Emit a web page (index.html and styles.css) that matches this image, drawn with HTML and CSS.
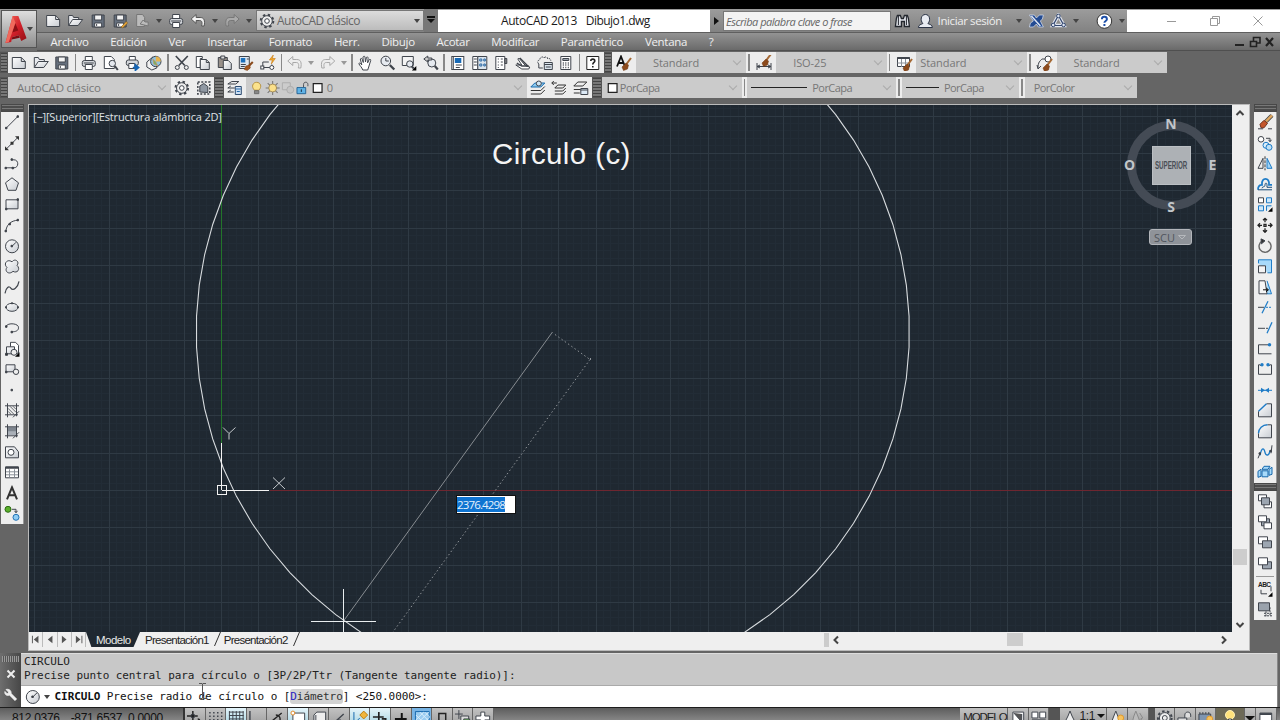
FILE: index.html
```html
<!DOCTYPE html>
<html lang="es">
  <head>
    <meta charset="utf-8">
    <title>AutoCAD 2013 - Dibujo1.dwg</title>
    <link rel="stylesheet" href="styles.css">
  </head>
  <body>
    <svg class="sprite">
      <defs>
        <linearGradient id="shade" x1="0" y1="0" x2="1" y2="1">
          <stop offset="0" stop-color="#fff"/>
          <stop offset="1" stop-color="#c9cdd3"/>
        </linearGradient>
        <linearGradient id="logo-red" x1="0" y1="0" x2="1" y2="1">
          <stop offset="0" stop-color="#f26a5c"/>
          <stop offset=".5" stop-color="#d2202a"/>
          <stop offset="1" stop-color="#8d0d12"/>
        </linearGradient>
      </defs>

      <!-- files -->
      <symbol id="new" viewBox="0 0 16 16"><path d="M1.500 2.500h9l4 4v7h-13z" fill="url(#shade)"/><path d="M10.500 2.500v4h4"/></symbol>
      <symbol id="open" viewBox="0 0 16 16"><path d="M1.500 12.500v-10h4l1 2h5v2" fill="#e8eaee"/><path d="M1.500 12.500l4-6h10l-4.500 6z" fill="url(#shade)"/></symbol>
      <symbol id="save" viewBox="0 0 16 16"><path d="M2 2h12v12h-12z" fill="#66707e"/><path d="M4.500 2h7v5h-7z" fill="#f4f4f4"/><path d="M4.500 10h7v4h-7z" fill="#fff"/><path d="M6.500 11v2"/></symbol>
      <symbol id="save-as" viewBox="0 0 16 16"><use href="#save"/><path d="M9 14l5-5.500 1.500 1.500-5 5z" fill="#e8a53a" stroke="#7a5a20" stroke-width=".6"/></symbol>
      <symbol id="export" viewBox="0 0 16 16"><path d="M2.500 1.500h6l2 3v9h-8z" fill="#bbb" stroke="#777"/><path d="M6 11l3-4 2 2h3v4z" fill="#bbb" stroke="#777"/></symbol>
      <symbol id="print" viewBox="0 0 16 16"><path d="M4.500 6v-4.500h7v4.500" fill="#fff"/><rect x="1.500" y="5.500" width="13" height="6" rx="2" fill="#d4d7db"/><path d="M4.500 9.500h7v5h-7z" fill="#fff"/><path d="M3 8h10"/></symbol>
      <symbol id="preview" viewBox="0 0 16 16"><path d="M1.500 1.500h7l3 3v9h-10z" fill="#fff"/><circle cx="9.500" cy="8.500" r="3.200" fill="#e4e8ee"/><path d="M12 11l3 4" stroke-width="2"/></symbol>
      <symbol id="publish" viewBox="0 0 16 16"><path d="M4.500 5v-3.500h6v3.500" fill="#fff"/><rect x="1.500" y="5" width="12" height="5.500" rx="2" fill="#d4d7db"/><path d="M4 8.500h6v5h-6z" fill="#fff"/><path d="M8 12.500h5m-2.500-3l3.500 3-3.500 3z" stroke="#1565b5" fill="#1565b5" stroke-width="1.400"/></symbol>
      <symbol id="globe" viewBox="0 0 16 16"><path d="M1 7l6-5 4 3v8l-5 2-5-3z" fill="#f1f1f1"/><circle cx="10" cy="6.500" r="5.200" fill="#8fc2df"/><path d="M10 1.500v5h5c0-3-2-5-5-5z" fill="#e8b34c" stroke="none"/><path d="M7 4l3 3 2 4-4-2z" fill="#79b264" stroke="#d98b5b" stroke-width=".6"/></symbol>

      <!-- edit -->
      <symbol id="cut" viewBox="0 0 16 16"><path d="M2 1l9 9.500M14 1l-9 9.500" stroke-width="1.700"/><circle cx="3.500" cy="12.500" r="2"/><circle cx="12.500" cy="12.500" r="2"/></symbol>
      <symbol id="copy" viewBox="0 0 16 16"><path d="M1.500 1.500h6v2h-2v9h-4z" fill="#fff"/><path d="M5.500 4.500h6l3 3v7h-9z" fill="url(#shade)"/><path d="M11.500 4.500v3h3"/></symbol>
      <symbol id="paste" viewBox="0 0 16 16"><path d="M1.500 2.500h9v10h-9z" fill="#98908a"/><path d="M4 1h4v3h-4z" fill="#ddd"/><path d="M6.500 5.500h5l3 3v6h-8z" fill="url(#shade)"/></symbol>
      <symbol id="match" viewBox="0 0 16 16"><path d="M1.500 1.500h10v12h-10z" fill="#dfe8f1"/><path d="M3 3h4.500v4.500h-4.500z" fill="#1a70bd" stroke="none"/><path d="M9 4h2M3 9.500h5M3 11.500h4"/><path d="M15 7l-4 4" stroke="#8a4a1c" stroke-width="2"/><path d="M8 11l4-1 .5 3-3 2.500-3-1z" fill="#a45a22" stroke="#7a3d12" stroke-width=".5"/></symbol>
      <symbol id="block-edit" viewBox="0 0 16 16"><path d="M3 12.500v-5.500h6M3 12.500h9v-3"/><rect x="1" y="11" width="3" height="3" fill="#fff"/><circle cx="12" cy="12.500" r="2" fill="#fff"/><path d="M13.500 0l-4 5h3l-1 4 4-5.500h-3z" fill="#f2a82c" stroke="#c77a10" stroke-width=".6"/></symbol>
      <symbol id="undo" viewBox="0 0 16 16"><path d="M1 6l5-4.500v3h4c4 0 5 3 4 8.500h-2.500c1-4 0-5.500-2-5.500h-3.500v3z"/></symbol>
      <symbol id="redo" viewBox="0 0 16 16"><path d="M15 6l-5-4.500v3h-4c-4 0-5 3-4 8.500h2.500c-1-4 0-5.500 2-5.500h3.500v3z"/></symbol>

      <!-- view -->
      <symbol id="pan" viewBox="0 0 16 16"><path d="M5 15c-1-3-3-4-4-6.500 1-1 2 0 3 1.500l-1.500-6c1-1 1.800-.5 2 .5l1 3-.3-5.500c.5-1 1.800-1 2 0l.5 5 1-4.700c1-.8 1.800 0 1.600 1l-.5 4.500 1.700-3.300c1-.5 1.700.2 1.400 1l-2 6.500-1 3z" fill="#fff"/></symbol>
      <symbol id="zoom-rt" viewBox="0 0 16 16"><circle cx="6" cy="6" r="4.800" fill="#e6eaf0"/><path d="M6 3v3h3"/><path d="M10 10l4.500 4.500" stroke-width="2.400"/></symbol>
      <symbol id="zoom-win" viewBox="0 0 16 16"><path d="M1.500 1.500h11v9h-11z" fill="#f4f4f4"/><circle cx="9" cy="9" r="3.200" fill="#e6eaf0"/><path d="M11 11.500l2 2" stroke-width="2"/><path d="M15.500 11v4.500h-4.500z" fill="#000" stroke="none"/></symbol>
      <symbol id="zoom-prev" viewBox="0 0 16 16"><circle cx="9" cy="8" r="4" fill="#e6eaf0"/><path d="M12 11l3 3.500" stroke-width="2.200"/><path d="M1 4l4-3v2h4v2h-4v2z" fill="#ccc"/></symbol>

      <!-- palettes -->
      <symbol id="props" viewBox="0 0 16 16"><rect x="2" y="1.500" width="12" height="13" fill="#fff"/><path d="M5 3h6.500v5h-6.500z" fill="#1769b5" stroke="none"/><path d="M3.500 2v12M6 10h6M6 12.500h4"/></symbol>
      <symbol id="dcenter" viewBox="0 0 16 16"><path d="M1 1.500h5v13h-5z" fill="#fff"/><path d="M6 1.500h9v13h-9z" fill="#dbe5ee"/><path d="M8 4h2v2h-2zM12 4h1.500v2h-1.500zM8 9h2v2h-2zM12 9h1.500v2h-1.500z" stroke="#2b69a4"/><path d="M2 4h3M2 7h3M2 10h3"/></symbol>
      <symbol id="palette" viewBox="0 0 16 16"><path d="M3 1.500h9v13h-9z" fill="#fff"/><path d="M12 3.500h2v5h-2z" fill="#888"/><path d="M5 4h1M8 4h2M5 7h1M8 7h2M5 10h1M8 10h2M5 12.500h1"/></symbol>
      <symbol id="sheets" viewBox="0 0 16 16"><path d="M1 10l6 4h7l1-2-4-1-7-8-1 1 4 6z" fill="#fff"/><path d="M5 3l8 8M2 8l5 3h7" stroke-width="1.400"/></symbol>
      <symbol id="markup" viewBox="0 0 16 16"><path d="M2 9c-2-2-1-4 1-4 0-3 3-4 4-2 2-2 4-1 4 1 2-1 3 0 3 2" stroke-dasharray="2 1"/><path d="M7.500 7.500h8v7h-8z" fill="#dbe5ee"/><path d="M7.500 9.500h8M9 12h5M2 9v4h4"/></symbol>
      <symbol id="calc" viewBox="0 0 16 16"><path d="M3 1.500h10v13h-10z" fill="#fff"/><path d="M5 3.500h6v2h-6z" fill="#9aa3ad"/><path d="M5 8h1M7.500 8h1M10 8h1M5 10h1M7.500 10h1M10 10h1M5 12.500h1M7.500 12.500h1M10 12.500h1" stroke-width="1.400"/></symbol>
      <symbol id="help-box" viewBox="0 0 16 16"><path d="M2 1.500h12v13h-12z" fill="#fff" stroke="#222"/><path d="M6 6c0-2.500 4-2.500 4 0 0 1.500-2 1.500-2 3.500M8 11v1.500" stroke="#222" stroke-width="1.600"/></symbol>

      <!-- styles -->
      <symbol id="brush" viewBox="0 0 16 16"><path d="M15 3l-4.500 6" stroke="#a66a35" stroke-width="2"/><path d="M6 12l4-4 2.500 2-1 4-4 1.500z" fill="#8d4b1c" stroke="#6e3610" stroke-width=".5"/></symbol>
      <symbol id="text-style" viewBox="0 0 16 16"><path d="M1 11.500l4-10 4 10M2.500 8h5" stroke="#111" stroke-width="1.800"/><use href="#brush"/></symbol>
      <symbol id="dim-style" viewBox="0 0 16 16"><path d="M1 8v7M15 8v7M1 11.500h14M4 10l-3 1.500 3 1.500M12 10l3 1.500-3 1.500"/><use href="#brush" transform="translate(0 -4)"/></symbol>
      <symbol id="table-style" viewBox="0 0 16 16"><path d="M1.500 2.500h12v9h-12z" fill="#fff"/><path d="M1.500 8h12M5.500 4v8M9.500 4v8" stroke="#8a9098"/><path d="M1.500 3h12" stroke-width="2"/><use href="#brush" transform="translate(1 1)"/></symbol>
      <symbol id="leader-style" viewBox="0 0 16 16"><path d="M1 13c0-6 2-7 4-9h4"/><path d="M0 10l1 4 3-3"/><circle cx="11" cy="4" r="3" fill="#fff"/><use href="#brush" transform="translate(0 1)"/></symbol>

      <!-- layers -->
      <symbol id="gear" viewBox="0 0 16 16"><circle cx="8" cy="8" r="6.300" stroke-width="2" stroke-dasharray="2.400 2.550"/><circle cx="8" cy="8" r="5.300" fill="#eee"/><circle cx="8" cy="8" r="2.300" fill="#fff"/></symbol>
      <symbol id="workspace" viewBox="0 0 16 16"><path d="M2 2h12v12h-12z" stroke-dasharray="2 1.500" stroke-width="1.500"/><path d="M4 12v-6l4-2.500 4 3v6z" fill="#8f98a3"/></symbol>
      <symbol id="layers" viewBox="0 0 16 16"><path d="M1 4l4-2.500h7l-3 2.500zM1 8l3-2M1 8h7M1 12l3-2M1 12h6" /><path d="M8.500 6.500h6v8h-6z" fill="#cfe0f2" stroke="#2d4b70"/><path d="M9 9h5M10 11.500h3" stroke="#2468ad"/></symbol>
      <symbol id="bulb" viewBox="0 0 16 16"><path d="M5.500 10.500c-4-4-2-9 2.500-9s6.500 5 2.500 9z" fill="#fbe28c" stroke="#b08c3a"/><path d="M5.500 11h5v3.500h-5z" fill="#888" stroke="#666"/></symbol>
      <symbol id="sun" viewBox="0 0 16 16"><path d="M8 0v16M0 8h16M2.300 2.300l11.400 11.400M13.700 2.300L2.300 13.700" stroke="#777" stroke-width="1.200"/><circle cx="8" cy="8" r="4.500" fill="#fbe08a" stroke="#9c8350"/></symbol>
      <symbol id="freeze" viewBox="0 0 16 16"><path d="M2 2h9v8h-9z" fill="#ccc" stroke="#aaa"/><circle cx="11" cy="10" r="4" fill="#c4c4c4" stroke="#aaa"/></symbol>
      <symbol id="unlock" viewBox="0 0 16 16"><path d="M9 7v-3c0-3.500 5-3.500 5 0v2"/><path d="M1.500 7.500h10v7h-10z" fill="#61b3e6" stroke="#1b5c8f"/><path d="M6.500 9.500v3" stroke="#123"/></symbol>
      <symbol id="swatch" viewBox="0 0 16 16"><path d="M3 3h10v10h-10z" fill="#fff" stroke="#222" stroke-width="1.400"/></symbol>
      <symbol id="lay-current" viewBox="0 0 16 16"><path d="M1 7l4-4h10l-4 4z" fill="#8ecaf0" stroke="#1b6cad"/><path d="M1 10.500h10l4-4M1 14h10l4-4" stroke="#333"/><circle cx="9" cy="3.500" r="2.500" fill="#cfe6f6"/></symbol>
      <symbol id="lay-prev" viewBox="0 0 16 16"><path d="M4 8l3-3h8l-3 3zM4 11h8l3-3M4 14h8l3-3M6 3h-5m2-2l-2 2 2 2" stroke="#333"/></symbol>
      <symbol id="lay-state" viewBox="0 0 16 16"><path d="M1 6l4-4h9l-4 4zM1 9.500h7l1-1M1 13h6" stroke="#333"/><path d="M8 8.500h7v6h-7z" fill="#dce9f5"/><path d="M8 10h7"/></symbol>

      <!-- infocenter -->
      <symbol id="binoculars" viewBox="0 0 16 16"><path d="M1 13.500l1-8 1-3h3l1 3h2l1-3h3l1 3 1 8h-5v-5h-3v5z" fill="#dfe2e8" stroke="#23272e" stroke-width="1.300"/><path d="M4 3v9M12 3v9" stroke="#23272e"/></symbol>
      <symbol id="user" viewBox="0 0 16 16"><path d="M1 14.500c0-3 3-3 4.500-4-3-3-2-9 2.500-9s5.500 6 2.500 9c1.500 1 4.500 1 4.500 4z" fill="#e9ecf2" stroke="#2b3446"/></symbol>
      <symbol id="exchange" viewBox="0 0 16 16"><path d="M1 2h5l2 3 3-3h4l-1 4-2 2 3 6h-5l-2-3-3 3h-4l1-4 3-2z" fill="#234b92" stroke="#cbd5e8" stroke-width=".8"/><path d="M3 3l9 10" stroke="#dfe7f5" stroke-width="1.400"/></symbol>
      <symbol id="a360" viewBox="0 0 16 16"><path d="M8 2.500l5.500 10h-11z" stroke="#e0e5f0" stroke-width="3.500"/><path d="M8 2.500l5.500 10h-11z" stroke="#34486f" stroke-width="1.200"/><circle cx="8" cy="3" r="1.800" fill="#dfe5f2" stroke="#34486f"/><circle cx="2.800" cy="12" r="1.800" fill="#dfe5f2" stroke="#34486f"/><circle cx="13.200" cy="12" r="1.800" fill="#dfe5f2" stroke="#34486f"/></symbol>
      <symbol id="help" viewBox="0 0 16 16"><circle cx="8" cy="8" r="7.300" fill="#fff" stroke="#333"/><path d="M5.500 6.300c0-3.300 5-3.300 5 0 0 1.700-2.500 1.700-2.500 3.500M8 11v2" stroke="#1d4fa8" stroke-width="2"/></symbol>

      <!-- draw -->
      <symbol id="line" viewBox="0 0 16 16"><path d="M2 14L14 2"/><path d="M1.500 13h1.500v1.500h-1.500zM13 1.500h1.500v1.500h-1.500z" fill="#333"/></symbol>
      <symbol id="xline" viewBox="0 0 16 16"><path d="M2 14L14 2"/><path d="M1 11v4h4zM15 5v-4h-4zM6.500 6.500h3v3h-3z" fill="#333" stroke="none"/></symbol>
      <symbol id="pline" viewBox="0 0 16 16"><path d="M2 12.500h8c5 0 5-8 0-8h-2"/><path d="M1 12h1.500v1.500h-1.500zM8 12h1.500v1.500h-1.500zM7 3.500h1.500v1.500h-1.500z" fill="#333"/></symbol>
      <symbol id="polygon" viewBox="0 0 16 16"><path d="M8 1.500l6.500 5-2.500 7.500h-8l-2.500-7.500z" fill="url(#shade)"/></symbol>
      <symbol id="rect" viewBox="0 0 16 16"><path d="M2 3.500h12v9h-12z" fill="url(#shade)"/><path d="M1.500 12h1.500v1.500h-1.500zM13 2.500h1.500v1.500h-1.500z" fill="#333"/></symbol>
      <symbol id="arc" viewBox="0 0 16 16"><path d="M2 14c0-6 5-11 12-11"/><path d="M1 13h1.500v1.500h-1.500zM5 6h1.500v1.500h-1.500zM13 2h1.500v1.500h-1.500z" fill="#333"/></symbol>
      <symbol id="circle" viewBox="0 0 16 16"><circle cx="8" cy="8" r="6.500" fill="url(#shade)"/><path d="M8 8l4-4"/><path d="M7 7h1.500v1.500h-1.500z" fill="#333"/></symbol>
      <symbol id="cloud" viewBox="0 0 16 16"><path d="M8 3.500c3-4 8 0 5 3.500 4 4 0 8.500-4 6-4 4-9 0-6-4-4-3 0-9 5-5.500z" fill="url(#shade)"/></symbol>
      <symbol id="spline" viewBox="0 0 16 16"><path d="M1 14c1-6 4-8 6-5s7-1 8-7" stroke-width="1.200"/></symbol>
      <symbol id="ellipse" viewBox="0 0 16 16"><ellipse cx="8" cy="8" rx="6" ry="4" fill="url(#shade)"/><path d="M1.500 7.500h1v1h-1zM13.500 7.500h1v1h-1zM7.500 3.500h1v1h-1z" fill="#333"/></symbol>
      <symbol id="earc" viewBox="0 0 16 16"><path d="M2 6c2-4 13-3 12.500 1.500 0 3-3 4-6.500 4"/><path d="M1.500 5.500h1.500v1.500h-1.500zM7 11h1.500v1.500h-1.500z" fill="#333"/></symbol>
      <symbol id="insert" viewBox="0 0 16 16"><path d="M6.500 6v-5h5l3 3v8h-3" fill="#fff"/><path d="M2.500 5.500h8v7h-8z" fill="url(#shade)"/><circle cx="10" cy="11" r="3" fill="#eee"/><path d="M1.500 12h2v2h-2z" fill="#333"/><path d="M15.500 11v4.500h-4.500z" fill="#000" stroke="none"/></symbol>
      <symbol id="block" viewBox="0 0 16 16"><path d="M2 3.500h9v7h-9z" fill="url(#shade)"/><circle cx="12" cy="10.500" r="2.700" fill="#eee"/><path d="M1.500 10h1.500v1.500h-1.500z" fill="#333"/></symbol>
      <symbol id="point" viewBox="0 0 16 16"><path d="M7 7h1.500v1.500h-1.500z" fill="#555"/></symbol>
      <symbol id="hatch" viewBox="0 0 16 16"><path d="M1 3.500h14M1 12.500h13M3.500 1v14M12.500 1v13"/><path d="M4 6l6 6M4 9l3 3M6 4l6 6M9 4l3 3" stroke-width=".8"/><path d="M15 9l-6 6"/></symbol>
      <symbol id="gradient" viewBox="0 0 16 16"><path d="M4 4h8v8h-8z" fill="#a9afb7" stroke="none"/><path d="M4 4h8v4h-8z" fill="#7f868f" stroke="none"/><path d="M1 3.500h14M1 12.500h13M3.500 1v14M12.500 1v13M15 9l-6 6"/></symbol>
      <symbol id="region" viewBox="0 0 16 16"><path d="M1.500 2.500h9l4 5v6h-13z" fill="url(#shade)"/><circle cx="7" cy="8" r="3" fill="#fff"/></symbol>
      <symbol id="table" viewBox="0 0 16 16"><path d="M1.500 2.500h13v11h-13z" fill="#fff"/><path d="M2 3.500h12" stroke-width="2"/><path d="M2 7.500h12M2 10.500h12M5.500 5v8M10.500 5v8" stroke="#8a9098"/></symbol>
      <symbol id="mtext" viewBox="0 0 16 16"><path d="M3 14L8 2l5 12M4.800 10h6.400" stroke="#333" stroke-width="2"/></symbol>
      <symbol id="addsel" viewBox="0 0 16 16"><circle cx="4" cy="4" r="3" fill="#5bb02c" stroke="#2d6b14"/><circle cx="12" cy="12" r="3" fill="#8fcdf5" stroke="#2273b5"/><path d="M8 4h4v3m-1.500-1.500l1.500 2 1.500-2"/></symbol>

      <!-- modify -->
      <symbol id="erase" viewBox="0 0 16 16"><path d="M15 1l-6 6" stroke="#444" stroke-width="4"/><path d="M15 1l-6 6" stroke="#e0a860" stroke-width="2.500"/><path d="M3 10l4-4 3.500 3-3.500 4.500h-3z" fill="#c4562b" stroke="#6e3420"/><path d="M1 14.500h5M11 14.500h4"/></symbol>
      <symbol id="mcopy" viewBox="0 0 16 16"><circle cx="4" cy="4" r="2.800" fill="#fff"/><path d="M9 3h4v3m-1.500-1.500l1.500 2 1.500-2"/><circle cx="9" cy="10" r="3" stroke="#1f7cc7" fill="#dbeefa"/><circle cx="12" cy="12" r="3" stroke="#1f7cc7" fill="#bfe0f6"/></symbol>
      <symbol id="mirror" viewBox="0 0 16 16"><path d="M6 3v10h-5z" fill="#eee"/><path d="M10 3v10h5z" fill="#9fd2f5" stroke="#1f7cc7"/><path d="M8 1v14" stroke="#333" stroke-dasharray="3 1"/></symbol>
      <symbol id="offset" viewBox="0 0 16 16"><path d="M1 13.500c0-4 2-5 4-5-1-8 8-8 7 0h3" stroke="#1f7cc7" stroke-width="1.800"/><path d="M1 13.500h14M5 12c0-2 3-1 3-3 0-3 2-3 2 0v2h5" stroke="#1b4d7a"/></symbol>
      <symbol id="array" viewBox="0 0 16 16"><path d="M1.500 1.500h5v5h-5z" fill="#fff"/><path d="M9.500 1.500h5v5h-5zM1.500 9.500h5v5h-5zM9.500 14.500v-5h5" stroke="#1f7cc7" fill="#cfe8fa"/><path d="M15.500 11v4.500h-4.500z" fill="#000" stroke="none"/></symbol>
      <symbol id="move" viewBox="0 0 16 16"><path d="M8 1v4M8 11v4M1 8h4M11 8h4M6 3l2-2 2 2M6 13l2 2 2-2M3 6l-2 2 2 2M13 6l2 2-2 2M7 7h2v2h-2z" stroke="#222" stroke-width="1.300"/></symbol>
      <symbol id="rotate" viewBox="0 0 16 16"><path d="M11 2.800a6 6 0 1 1-5.500-.2" stroke="#666" stroke-width="1.400"/><path d="M4 .5l4 2-3.500 3z" fill="#333"/></symbol>
      <symbol id="scale" viewBox="0 0 16 16"><path d="M1.500 5v-3.500h13v13h-4" fill="#a8dafa" stroke="#1f7cc7"/><path d="M1.500 7.500h7v7h-7z" fill="#f3f3f3"/></symbol>
      <symbol id="stretch" viewBox="0 0 16 16"><path d="M10 1.500l4.500 13h-5" fill="#a8dafa" stroke="#1f7cc7"/><path d="M8 1.500h-6v13h8z" fill="#f6f6f6"/><path d="M6 10.500h5m-2-2l2.500 2-2.500 2" stroke="#111"/></symbol>
      <symbol id="trim" viewBox="0 0 16 16"><path d="M5 14l6-12" stroke="#1f7cc7" stroke-width="1.300"/><path d="M1 8h6"/><path d="M9 8h6" stroke="#1f7cc7" stroke-dasharray="2 1"/></symbol>
      <symbol id="extend" viewBox="0 0 16 16"><path d="M10 13l5-11" stroke="#1f7cc7" stroke-width="1.300"/><path d="M1 8h5"/><path d="M6 8h6" stroke-dasharray="2 1"/></symbol>
      <symbol id="break-pt" viewBox="0 0 16 16"><path d="M9 3.500h-7.500v9h13" fill="#eee"/><path d="M9 3.500h5"/><circle cx="12.500" cy="3.500" r="1.700" fill="#1f7cc7" stroke="none"/></symbol>
      <symbol id="break" viewBox="0 0 16 16"><path d="M3 3.500h-1.500v9.500h13v-9.500h-1.500" fill="#eee"/><path d="M3 4h2M11 4h2"/><circle cx="5" cy="3.500" r="1.700" fill="#1f7cc7" stroke="none"/><circle cx="11" cy="3.500" r="1.700" fill="#1f7cc7" stroke="none"/></symbol>
      <symbol id="join" viewBox="0 0 16 16"><path d="M1 8h14" stroke="#1f7cc7"/><path d="M4 5.500l4 2.500-4 2.500zM12 5.500l-4 2.500 4 2.500z" fill="#1f7cc7" stroke="none"/></symbol>
      <symbol id="chamfer" viewBox="0 0 16 16"><path d="M1.500 9v5.500h13v-13h-5" fill="url(#shade)"/><path d="M1.500 9l8-7.500" stroke="#1f7cc7" stroke-width="1.400"/></symbol>
      <symbol id="fillet" viewBox="0 0 16 16"><path d="M1.500 10v4.500h13v-13h-4" fill="url(#shade)"/><path d="M1.500 10c0-5 4-8.500 9-8.500" stroke="#1f7cc7" stroke-width="1.400"/></symbol>
      <symbol id="blend" viewBox="0 0 16 16"><path d="M3 11c2-9 4-7 5-3s4 4 5-2" stroke="#1f7cc7" stroke-width="1.400"/><path d="M1 14l2-5M15 1l-1 8"/><path d="M2 8.500h1.500v1.500h-1.500zM13 6h1.500v1.500h-1.500z" fill="#333"/></symbol>
      <symbol id="explode" viewBox="0 0 16 16"><path d="M5 6.500h6v6h-6zM1 7l3-2v7l-3 1zM12 5l3-2v7l-3 1zM5 5l2-3h6l-2 3z" fill="#a8dafa" stroke="#1668ad"/></symbol>

      <!-- draw order -->
      <symbol id="front" viewBox="0 0 16 16"><path d="M1.500 1.500h8v6h-8zM7 8.500h7.500v6h-7.500z" fill="#fff"/><path d="M4.500 4.500h8v7h-8z" fill="#9da6b1"/></symbol>
      <symbol id="back" viewBox="0 0 16 16"><path d="M4.500 4.500h8v7h-8z" fill="#9da6b1"/><path d="M1.500 1.500h8v6h-8zM7 8.500h7.500v6h-7.500z" fill="#fff"/></symbol>
      <symbol id="above" viewBox="0 0 16 16"><path d="M1.500 2.500h9v7h-9z" fill="#fff"/><path d="M5.500 6.500h9v7h-9z" fill="#9da6b1"/></symbol>
      <symbol id="under" viewBox="0 0 16 16"><path d="M5.500 6.500h9v7h-9z" fill="#9da6b1"/><path d="M1.500 2.500h9v7h-9z" fill="#fff"/></symbol>
      <symbol id="hatch-back" viewBox="0 0 16 16"><path d="M1.500 1.500h11v8h-11z" fill="#9aa2ac"/><path d="M7 12h8M7 14.500h8M9 10v5M13 6v9" stroke-dasharray="2 1"/></symbol>
    </svg>

    <div class="top-strip"></div>

    <header class="header">
      <div class="app-button">
        <svg class="logo" viewBox="0 0 24 32">
          <path d="M9 2h6l8.500 23-5.500 3-2.500-6-7 2-1 5-6 1z" fill="url(#logo-red)"/>
          <path d="M11.500 9l3.500 8-6.500 2z" fill="#8b1015"/>
          <path d="M9 2L1.500 30l3.500-1 7-20z" fill="#f0695c"/>
          <path d="M8.500 24l7-2 1 2.500-8.500 2z" fill="#7a0d12"/>
        </svg>
        <span class="arrow"></span>
      </div>
      <div class="header-rows">
        <div class="titlebar">
          <div class="quick-access">
            <svg class="icon"><use href="#new"/></svg>
            <svg class="icon"><use href="#open"/></svg>
            <svg class="icon"><use href="#save"/></svg>
            <svg class="icon"><use href="#save-as"/></svg>
            <svg class="icon"><use href="#export"/></svg>
            <span class="drop"></span>
            <svg class="icon"><use href="#print"/></svg>
            <svg class="icon white"><use href="#undo"/></svg>
            <span class="drop"></span>
            <svg class="icon faded"><use href="#redo"/></svg>
            <span class="drop"></span>
          </div>
          <div class="workspace-select">
            <svg class="icon"><use href="#gear"/></svg>
            <span class="label">AutoCAD clásico</span>
            <span class="arrow"></span>
          </div>
          <div class="customize"><span class="arrow dark"></span></div>
          <div class="title"><span>AutoCAD 2013</span><span>Dibujo1.dwg</span></div>
          <div class="info-center">
            <span class="arrow-right"></span>
            <div class="search">Escriba palabra clave o frase</div>
            <svg class="icon"><use href="#binoculars"/></svg>
            <svg class="icon"><use href="#user"/></svg>
            <span class="signin">Iniciar sesión</span>
            <span class="drop"></span>
            <svg class="icon"><use href="#exchange"/></svg>
            <svg class="icon"><use href="#a360"/></svg>
            <span class="drop"></span>
            <svg class="icon help-icon"><use href="#help"/></svg>
            <span class="drop"></span>
          </div>
          <div class="window-buttons">
            <svg viewBox="0 0 12 12"><path d="M1 6.500h9"/></svg>
            <svg viewBox="0 0 12 12"><path d="M1.500 3.500h7v7h-7zM3.500 3v-1.500h7v7h-1.500"/></svg>
            <svg viewBox="0 0 12 12"><path d="M1.500 1.500l9 9M10.500 1.500l-9 9"/></svg>
          </div>
        </div>
        <nav class="menubar">
          <span>Archivo</span>
          <span>Edición</span>
          <span>Ver</span>
          <span>Insertar</span>
          <span>Formato</span>
          <span>Herr.</span>
          <span>Dibujo</span>
          <span>Acotar</span>
          <span>Modificar</span>
          <span>Paramétrico</span>
          <span>Ventana</span>
          <span>?</span>
          <div class="doc-buttons">
            <svg viewBox="0 0 12 12"><path d="M1 9h9" stroke-width="2"/></svg>
            <svg viewBox="0 0 12 12"><path d="M1.500 5.500h6v5h-6zM4.500 5v-3.500h6.500v5.500h-3" stroke-width="1.600"/></svg>
            <svg viewBox="0 0 12 12"><path d="M2 2l7 8M9 2l-7 8" stroke-width="2.200"/></svg>
          </div>
        </nav>
      </div>
    </header>

    <div class="toolbar">
      <span class="grip"></span>
      <div class="tools">
        <svg class="icon"><use href="#new"/></svg>
        <svg class="icon"><use href="#open"/></svg>
        <svg class="icon"><use href="#save"/></svg>
        <span class="sep"></span>
        <svg class="icon"><use href="#print"/></svg>
        <svg class="icon"><use href="#preview"/></svg>
        <svg class="icon"><use href="#publish"/></svg>
        <svg class="icon"><use href="#globe"/></svg>
        <span class="sep"></span>
        <svg class="icon"><use href="#cut"/></svg>
        <svg class="icon"><use href="#copy"/></svg>
        <svg class="icon"><use href="#paste"/></svg>
        <svg class="icon"><use href="#match"/></svg>
        <svg class="icon"><use href="#block-edit"/></svg>
        <span class="sep"></span>
        <svg class="icon disabled"><use href="#undo"/></svg>
        <span class="drop disabled"></span>
        <svg class="icon disabled"><use href="#redo"/></svg>
        <span class="drop disabled"></span>
        <span class="sep"></span>
        <svg class="icon"><use href="#pan"/></svg>
        <svg class="icon"><use href="#zoom-rt"/></svg>
        <svg class="icon"><use href="#zoom-win"/></svg>
        <svg class="icon"><use href="#zoom-prev"/></svg>
        <span class="sep"></span>
        <svg class="icon"><use href="#props"/></svg>
        <svg class="icon"><use href="#dcenter"/></svg>
        <svg class="icon"><use href="#palette"/></svg>
        <svg class="icon"><use href="#sheets"/></svg>
        <svg class="icon"><use href="#markup"/></svg>
        <svg class="icon"><use href="#calc"/></svg>
        <span class="sep"></span>
        <svg class="icon"><use href="#help-box"/></svg>
      </div>
      <span class="grip"></span>
      <div class="tools styles-bar">
        <svg class="icon"><use href="#text-style"/></svg>
        <div class="combo style-combo"><span>Standard</span></div>
        <span class="sep"></span>
        <svg class="icon"><use href="#dim-style"/></svg>
        <div class="combo style-combo"><span>ISO-25</span></div>
        <span class="sep"></span>
        <svg class="icon"><use href="#table-style"/></svg>
        <div class="combo style-combo near"><span>Standard</span></div>
        <span class="sep"></span>
        <svg class="icon"><use href="#leader-style"/></svg>
        <div class="combo style-combo"><span>Standard</span></div>
      </div>
    </div>

    <div class="toolbar second">
      <span class="grip"></span>
      <div class="tools">
        <div class="combo workspace-combo"><span>AutoCAD clásico</span></div>
        <svg class="icon"><use href="#gear"/></svg>
        <svg class="icon"><use href="#workspace"/></svg>
      </div>
      <span class="grip wide"></span>
      <div class="tools">
        <svg class="icon"><use href="#layers"/></svg>
        <div class="combo layer-combo">
          <svg class="icon small"><use href="#bulb"/></svg>
          <svg class="icon small"><use href="#sun"/></svg>
          <svg class="icon small"><use href="#freeze"/></svg>
          <svg class="icon small"><use href="#unlock"/></svg>
          <svg class="icon small"><use href="#swatch"/></svg>
          <span>0</span>
        </div>
        <svg class="icon"><use href="#lay-current"/></svg>
        <svg class="icon"><use href="#lay-prev"/></svg>
        <svg class="icon"><use href="#lay-state"/></svg>
      </div>
      <span class="grip wide"></span>
      <div class="tools">
        <div class="combo color-combo"><svg class="icon small"><use href="#swatch"/></svg><span>PorCapa</span></div>
        <span class="sep"></span>
        <div class="combo ltype-combo"><i class="rule"></i><span>PorCapa</span></div>
        <span class="sep"></span>
        <div class="combo lweight-combo"><i class="rule"></i><span>PorCapa</span></div>
        <span class="sep"></span>
        <div class="combo plot-combo"><span>PorColor</span></div>
      </div>
    </div>

    <main class="main">
      <div class="side">
        <div class="side-grip"></div>
        <div class="side-tools">
          <svg class="icon"><use href="#line"/></svg>
          <svg class="icon"><use href="#xline"/></svg>
          <svg class="icon"><use href="#pline"/></svg>
          <svg class="icon"><use href="#polygon"/></svg>
          <svg class="icon"><use href="#rect"/></svg>
          <svg class="icon"><use href="#arc"/></svg>
          <svg class="icon"><use href="#circle"/></svg>
          <svg class="icon"><use href="#cloud"/></svg>
          <svg class="icon"><use href="#spline"/></svg>
          <svg class="icon"><use href="#ellipse"/></svg>
          <svg class="icon"><use href="#earc"/></svg>
          <svg class="icon"><use href="#insert"/></svg>
          <svg class="icon"><use href="#block"/></svg>
          <svg class="icon"><use href="#point"/></svg>
          <svg class="icon"><use href="#hatch"/></svg>
          <svg class="icon"><use href="#gradient"/></svg>
          <svg class="icon"><use href="#region"/></svg>
          <svg class="icon"><use href="#table"/></svg>
          <svg class="icon"><use href="#mtext"/></svg>
          <svg class="icon"><use href="#addsel"/></svg>
        </div>
      </div>

      <section class="document">
        <div class="viewport-row">
          <div class="viewport">
            <!-- viewBox keeps screen coordinates, origin of the UCS is at 222,490 -->
            <svg class="drawing" viewBox="29 105 1203 527">
              <path id="grid-minor" stroke="#222c36"/>
              <path id="grid-major" stroke="#2f3a44"/>
              <path d="M221.500 105v338" stroke="#22752a"/>
              <path d="M270 490.500h962" stroke="#6e2630"/>
              <polygon id="big-circle" class="smooth" stroke="#d8dcdf" stroke-width="1.100"/>
              <path class="smooth" d="M552.500 332L343.500 621" stroke="#878c91"/>
              <path class="smooth" d="M555 334.500L590 359.500M590 359.500L393 632" stroke="#8f9499" stroke-dasharray="1.500 2.500"/>
              <circle cx="590.500" cy="359" r="1" fill="#8f9499" stroke="none"/>
              <path d="M221.500 443v47M222 490.500h47M217.500 485.500h9v9h-9z" stroke="#f2f2f2"/>
              <path class="smooth" d="M223 427.500l6 6M235.500 427.500l-6.500 6v6M273 477.500l12 11.500M285 477.500l-12 11.500" stroke="#c4c8cc"/>
              <path d="M311 621.500h65M343.500 589v43" stroke="#e9eef0"/>
            </svg>
            <div class="view-label">[−][Superior][Estructura alámbrica 2D]</div>
            <div class="caption">Circulo (c)</div>
            <div class="dyn-input"><span>2376.4298</span></div>
            <div class="viewcube">
              <span class="n">N</span>
              <span class="w">O</span>
              <span class="e">E</span>
              <span class="s">S</span>
              <div class="face"><b>SUPERIOR</b></div>
            </div>
            <div class="ucs-menu">SCU <svg viewBox="0 0 8 5"><path d="M.5.500h7l-3.500 3.500z"/></svg></div>
          </div>
          <div class="vscroll">
            <svg viewBox="0 0 10 8"><path d="M1.500 6l3.500-3.500 3.500 3.500"/></svg>
            <span class="thumb"></span>
            <svg viewBox="0 0 10 8"><path d="M1.500 2l3.500 3.500 3.500-3.500"/></svg>
          </div>
        </div>
        <div class="bottom-row">
          <div class="tab-nav">
            <svg viewBox="0 0 10 10"><path d="M1 1v8h1v-8zM8 1v8l-5-4z"/></svg>
            <svg viewBox="0 0 10 10"><path d="M8 1v8l-5-4z"/></svg>
            <svg viewBox="0 0 10 10"><path d="M2 1v8l5-4z"/></svg>
            <svg viewBox="0 0 10 10"><path d="M8 1v8h1v-8zM2 1v8l5-4z"/></svg>
          </div>
          <div class="tab active">Modelo</div>
          <div class="tab">Presentación1</div>
          <svg class="slash" viewBox="0 0 7 14"><path d="M6.500 0L.5 14"/></svg>
          <div class="tab">Presentación2</div>
          <svg class="slash" viewBox="0 0 7 14"><path d="M6.500 0L.5 14"/></svg>
          <div class="hscroll">
            <span class="splitter"></span>
            <svg viewBox="0 0 8 10"><path d="M6 1.500l-3.500 3.500 3.500 3.500"/></svg>
            <span class="thumb"></span>
            <svg viewBox="0 0 8 10"><path d="M2 1.500l3.500 3.500-3.500 3.500"/></svg>
          </div>
        </div>
      </section>

      <div class="side right">
        <div class="side-grip"></div>
        <div class="side-tools">
          <svg class="icon"><use href="#erase"/></svg>
          <svg class="icon"><use href="#mcopy"/></svg>
          <svg class="icon"><use href="#mirror"/></svg>
          <svg class="icon"><use href="#offset"/></svg>
          <svg class="icon"><use href="#array"/></svg>
          <svg class="icon"><use href="#move"/></svg>
          <svg class="icon"><use href="#rotate"/></svg>
          <svg class="icon"><use href="#scale"/></svg>
          <svg class="icon"><use href="#stretch"/></svg>
          <svg class="icon"><use href="#trim"/></svg>
          <svg class="icon"><use href="#extend"/></svg>
          <svg class="icon"><use href="#break-pt"/></svg>
          <svg class="icon"><use href="#break"/></svg>
          <svg class="icon"><use href="#join"/></svg>
          <svg class="icon"><use href="#chamfer"/></svg>
          <svg class="icon"><use href="#fillet"/></svg>
          <svg class="icon"><use href="#blend"/></svg>
          <svg class="icon"><use href="#explode"/></svg>
        </div>
        <div class="side-grip order"></div>
        <div class="side-tools">
          <svg class="icon"><use href="#front"/></svg>
          <svg class="icon"><use href="#back"/></svg>
          <svg class="icon"><use href="#above"/></svg>
          <svg class="icon"><use href="#under"/></svg>
          <span class="hsep"></span>
          <svg class="icon" viewBox="0 0 16 16"><text class="abc" x="1" y="6" textLength="13">ABC</text><path d="M4 8.500v4h6M14 5v5"/><path d="M15.500 11v4.500h-4.500z" fill="#000" stroke="none"/></svg>
          <svg class="icon"><use href="#hatch-back"/></svg>
        </div>
      </div>
    </main>

    <section class="command">
      <div class="command-side">
        <span class="dots"></span>
        <svg viewBox="0 0 10 10"><path d="M1.500 1.500l7 7M8.500 1.500l-7 7" stroke-width="2"/></svg>
        <svg class="wrench" viewBox="0 0 14 14"><path d="M5 5l7 7" stroke-width="3"/><path d="M2 1.500l2.500 2.500v1.500h-1.500L.8 3.500c-.5 3 2 4.500 4 3.800L7 5.500C7.800 3 5 .5 2 1.500z" fill="#eee" stroke-width=".8"/></svg>
      </div>
      <div class="command-lines">
        <div class="history">
          <p>CIRCULO</p>
          <p>Precise punto central para círculo o [3P/2P/Ttr (Tangente tangente radio)]:</p>
        </div>
        <div class="prompt">
          <svg class="icon"><use href="#circle"/></svg>
          <span class="drop"></span>
          <p><b>CIRCULO</b> Precise radio de círculo o [<span class="option"><i>D</i>iámetro</span>] &lt;250.0000&gt;:</p>
          <svg class="ibeam" viewBox="0 0 9 16"><path d="M1 .5h3l.5.500.5-.5h3M4.500 1v14M1 15.500h3l.5-.5.500.5h3"/></svg>
        </div>
      </div>
    </section>

    <footer class="statusbar">
      <div class="coords"><span>812.0376</span><span>-871.6537, 0.0000</span></div>
      <div class="status-tools">
        <svg viewBox="0 0 20 14"><path d="M2 7h11M8 2v12M13 10a2 2 0 1 1 0 4" stroke="#222" stroke-width="1.500"/><circle cx="8" cy="7" r="2" fill="#222"/></svg>
        <svg viewBox="0 0 20 14"><path d="M4 3v12M8 3v12M12 3v12M16 3v12" stroke-dasharray="1.500 2" stroke-width="1.500"/></svg>
        <svg class="on" viewBox="0 0 20 14"><path d="M3 3h15M3 6.500h15M3 10h15M3 13.500h15M3.500 2v12M7 2v12M10.500 2v12M14 2v12M17.500 2v12"/></svg>
        <svg viewBox="0 0 20 14"><path d="M3 2v10h7v3" stroke-width="1.400"/></svg>
        <svg viewBox="0 0 20 14"><path d="M4 13l11-9M4 12.500h12M9 6c4 0 5 3 4 7" stroke="#222" stroke-width="1.400"/></svg>
        <svg class="on" viewBox="0 0 20 14"><path d="M5 4h12v12h-12z" fill="#fff"/><circle cx="5" cy="4" r="2" fill="#fff" stroke="#e08a2a"/></svg>
        <svg viewBox="0 0 20 14"><path d="M5 6l3-3h9v9l-3 3h-9z" fill="#eee"/><path d="M7 6v9"/></svg>
        <svg viewBox="0 0 20 14"><path d="M5 14L15 5M7 12l5-1" stroke-width="1.400"/></svg>
        <svg class="on" viewBox="0 0 20 14"><path d="M4 3v12l6-6" stroke="#1668ad"/><path d="M14 2l4 4-4 4-4-4z" fill="#f0b53c" stroke="#b97c10"/></svg>
        <svg class="on" viewBox="0 0 20 14"><path d="M3 8h11M9 3v11M12 10h4v4" stroke="#222" stroke-width="1.700"/></svg>
        <svg viewBox="0 0 20 14"><path d="M4 10h12M11 4v10" stroke="#111" stroke-width="2"/></svg>
        <svg class="on strong" viewBox="0 0 20 14"><path d="M3.500 2.500h14v14h-14z" fill="#9accf0" stroke="#1668ad"/><path d="M4 6l10 10M4 11l5 5M8 3l10 10M13 3l5 5M17 3L6 14M12 3L4 11M18 8l-6 6" stroke="#d9eefb"/></svg>
        <svg viewBox="0 0 20 14"><path d="M7 4.500h7v11h-7z" stroke="#222" stroke-width="1.500"/></svg>
        <svg viewBox="0 0 20 14"><path d="M2 5h8M6 1v9"/><path d="M8 7h8v8h-8z" fill="#ddd"/><path d="M11 10h6v6h-6z" fill="#69b558"/></svg>
        <svg viewBox="0 0 20 14"><path d="M8 3h4v4h5v4h-5v5h-4v-5h-5v-4h5z" fill="#fff"/></svg>
      </div>
      <div class="status-right">
        <span class="cell model">MODELO</span>
        <svg class="cell" viewBox="0 0 20 14"><path d="M5 3h11v12h-11z" fill="#fff"/><path d="M6 4l8 9v-8" fill="#555"/></svg>
        <svg class="cell" viewBox="0 0 20 14"><path d="M3 3h6v6h-6zM11 3h6v6h-6z" fill="#fff"/><path d="M3 11h14"/></svg>
        <span class="gap"></span>
        <span class="cell ratio"><svg viewBox="0 0 14 14"><path d="M7 2l2 5 3 6h-10l3-6z" fill="#eee"/></svg>1:1<i class="arrow dark"></i></span>
        <svg class="cell" viewBox="0 0 20 14"><path d="M9 2l2 5 3 8h-10l3-8z" fill="#eee"/><circle cx="14" cy="9" r="3" fill="#f8c25c" stroke="#e09a2a"/></svg>
        <svg class="cell" viewBox="0 0 20 14"><path d="M8 2l2 5 3 8h-9l2-8z" fill="#bbb" stroke="#888"/><path d="M12 4l3 5-2 1 3 4" stroke="#888"/></svg>
        <span class="gap narrow"></span>
        <svg class="cell" viewBox="0 0 20 14"><circle cx="10" cy="9" r="7" stroke-width="2" stroke-dasharray="2.500 2.500"/><circle cx="10" cy="9" r="5.500" fill="#eee"/><circle cx="10" cy="9" r="2.500"/></svg>
        <svg class="cell" viewBox="0 0 20 14"><path d="M3 9h9v6h-9zM10 9v-3c0-4 6-4 6 0v2" fill="#ddd"/></svg>
        <svg class="cell" viewBox="0 0 20 14"><path d="M3 5h12v8h-12z" fill="#7f95b0"/><path d="M4 3v2M7 3v2M10 3v2M13 3v2"/><circle cx="14" cy="10" r="3" fill="#f8c25c" stroke="#e09a2a"/></svg>
        <span class="cell lamp"><svg viewBox="0 0 16 14"><circle cx="8" cy="7" r="4.500" fill="#ffe27c" stroke="#fff2b8"/><path d="M6.500 11h3v3h-3z" fill="#eee"/></svg></span>
        <span class="cell tray"><i class="arrow dark"></i></span>
        <svg class="cell" viewBox="0 0 20 14"><path d="M4 4h12v12h-12z" fill="#fff"/><path d="M4 5h12" stroke-width="2"/></svg>
      </div>
    </footer>

    <script>
      // grid lines grow from the UCS origin
      const originX = 221.5;
      const originY = 490.5;
      const step = 7.49;

      let minor = '';
      let major = '';

      for (let i = -52; i <= 136; i++) {
        const x = Math.round(originX + i * step - 0.5) + 0.5;
        const y = Math.round(originY + i * step - 0.5) + 0.5;
        let lines = '';

        if (x > 29 && x < 1232) {
          lines += `M${x} 105V632`;
        }
        if (y > 105 && y < 632) {
          lines += `M29 ${y}H1232`;
        }

        if (i % 5 === 0) {
          major += lines;
        } else {
          minor += lines;
        }
      }

      document.querySelector('#grid-minor').setAttribute('d', minor);
      document.querySelector('#grid-major').setAttribute('d', major);

      // the circle is displayed as segments
      const points = [];
      for (let a = 2.5; a < 360; a += 5) {
        const rad = a * Math.PI / 180;
        points.push(`${552.8 + 356.6 * Math.cos(rad)},${331.7 + 356.6 * Math.sin(rad)}`);
      }
      document.querySelector('#big-circle').setAttribute('points', points.join(' '));
    </script>
  </body>
</html>
```
FILE: styles.css
```css
* {
  box-sizing: border-box;
}

body {
  margin: 0;
  width: 1280px;
  height: 720px;
  overflow: hidden;
  display: flex;
  flex-direction: column;
  background-color: #656565;
  font-family: "Open Sans", "Noto Sans", sans-serif;
  font-size: 11px;
  color: #222;
}

p {
  margin: 0;
}

.sprite {
  position: absolute;
  width: 0;
  height: 0;
}

svg {
  fill: none;
  stroke: #40454d;
  flex: none;
}

.icon {
  width: 21.6px;
  height: 16px;
}

.icon.small {
  width: 15.3px;
  height: 14px;
}

.icon.disabled {
  stroke: #a9a9a9;
}

.icon.white {
  fill: #f2f2f2;
  stroke: #555;
}

.icon.faded {
  fill: #aaa;
  stroke: #777;
}

.arrow,
.drop::after {
  content: "";
  display: block;
  flex: none;
  border: 3px solid transparent;
  border-top: 4px solid #444;
  border-bottom: 0;
}

.arrow.dark {
  border-width: 4px;
  border-top-color: #111;
  border-bottom: 0;
}

.drop {
  width: 11px;
  flex: none;
  display: flex;
  justify-content: center;
}

.drop.disabled::after {
  border-top-color: #999;
}

.top-strip {
  height: 9px;
  flex: none;
  background-color: black;
}

/* header */

.header {
  height: 42px;
  flex: none;
  display: flex;
  background: linear-gradient(#9b9b9b, #848484 45%, #6c6c6c);
}

.app-button {
  width: 37px;
  height: 38px;
  margin: 1px 0 0 1px;
  display: flex;
  align-items: center;
  justify-content: space-between;
  padding: 0 3px 0 2px;
  border: 1px solid #555;
  background: linear-gradient(#dedede, #8e8e8e);
}

.logo {
  width: 23px;
  height: 31px;
  stroke: none;
}

.header-rows {
  flex: 1;
}

.titlebar {
  height: 23px;
  display: flex;
  align-items: center;
  background: linear-gradient(#9c9c9c, #828282);
}

.quick-access {
  width: 219px;
  padding-left: 5px;
  display: flex;
  align-items: center;
}

.quick-access .icon {
  width: 22.3px;
}

.quick-access .drop {
  width: 11.5px;
}

.workspace-select {
  width: 168px;
  height: 21px;
  padding: 0 3px 0 0;
  display: flex;
  align-items: center;
  border: 1px solid #777;
  background: linear-gradient(#dcdcdc, #bcbcbc);
  color: #666;
  font-size: 12px;
  letter-spacing: -0.5px;
}

.workspace-select .icon {
  width: 20px;
}

.workspace-select .label {
  flex: 1;
}

.customize {
  width: 14px;
  height: 23px;
  display: flex;
  align-items: center;
  justify-content: center;
  background-color: #777;
}

.customize .arrow {
  position: relative;
}

.customize .arrow::before {
  content: "";
  position: absolute;
  left: -4px;
  top: -7px;
  width: 8px;
  height: 2px;
  background-color: #111;
}

.title {
  width: 272px;
  height: 22px;
  padding-left: 63px;
  display: flex;
  align-items: center;
  gap: 9px;
  background-color: white;
  color: #1a1a1a;
  font-size: 12px;
  letter-spacing: -0.55px;
  white-space: nowrap;
}

.title span:first-child {
  letter-spacing: -0.42px;
}

.info-center {
  flex: 1;
  display: flex;
  align-items: center;
}

.arrow-right {
  margin: 0 4px;
  border: 4px solid transparent;
  border-left: 5px solid #111;
  border-right: 0;
}

.search {
  width: 168px;
  height: 20px;
  padding-left: 2px;
  line-height: 20px;
  border: 1px solid #777;
  background-color: #f3f3f3;
  color: #666;
  font-style: italic;
  white-space: nowrap;
  letter-spacing: -0.48px;
}

.info-center .icon {
  width: 22.8px;
}

.signin {
  width: 77px;
  padding-left: 1px;
  color: #eee;
  font-size: 11.5px;
  letter-spacing: -0.4px;
  white-space: nowrap;
}

.info-center .help-icon {
  margin-left: 12px;
}

.window-buttons {
  width: 153px;
  height: 22px;
  padding-left: 23px;
  display: flex;
  align-items: center;
  justify-content: space-around;
  background-color: white;
}

.window-buttons svg {
  width: 12px;
  height: 12px;
  stroke: #999;
}

.menubar {
  height: 19px;
  padding-left: 13.5px;
  display: flex;
  align-items: center;
  gap: 21.7px;
  line-height: 15px;
  background: linear-gradient(#939393, #6a6a6a);
  border-top: 1px solid #5f5f5f;
  border-bottom: 1px solid #4f4f4f;
  color: #f0f0f0;
  font-size: 11.5px;
  letter-spacing: -0.3px;
}

.doc-buttons {
  margin-left: auto;
  margin-right: 4px;
  display: flex;
  gap: 3px;
}

.doc-buttons svg {
  width: 12px;
  height: 12px;
  stroke: #222;
}

/* toolbars */

.toolbar {
  height: 21px;
  margin-top: 1px;
  flex: none;
  display: flex;
}

.toolbar.second {
  margin-top: 4px;
}

.grip {
  width: 8px;
  flex: none;
  border: 1px solid #555;
  background: repeating-linear-gradient(#444 0 1px, #777 1px 3px);
}

.grip.wide {
  width: 10px;
}

.tools {
  display: flex;
  align-items: center;
  background-color: #ededed;
}

.sep {
  width: 5.7px;
  height: 17px;
  flex: none;
  border-right: 2.500px solid #ededed;
  border-left: 2.500px solid #ededed;
  background-color: #888;
}

.styles-bar .icon {
  width: 24px;
}

.combo {
  height: 21px;
  flex: none;
  display: flex;
  align-items: center;
  background-color: #cbcbcb;
  color: #777;
  white-space: nowrap;
  letter-spacing: -0.1px;
}

.combo::after {
  content: "";
  width: 5px;
  height: 5px;
  margin: 0 6px 3px auto;
  border: solid #aaa;
  border-width: 0 1px 1px 0;
  transform: rotate(45deg);
}

.style-combo {
  width: 110.5px;
  padding-left: 17px;
}

.style-combo.near {
  padding-left: 4px;
}

.workspace-combo {
  width: 163px;
  padding-left: 9px;
  font-size: 11.5px;
  letter-spacing: -0.2px;
}

.layer-combo {
  width: 281px;
  padding-left: 3.5px;
}

.layer-combo span {
  margin-left: 1px;
}

.color-combo {
  width: 140px;
  padding-left: 3px;
}

.ltype-combo {
  width: 149px;
  padding-left: 4px;
}

.lweight-combo {
  width: 117px;
  padding-left: 4px;
}

.plot-combo {
  width: 112px;
  padding-left: 9px;
}

.rule {
  width: 56px;
  height: 1px;
  margin-right: 5px;
  background-color: #222;
}

.lweight-combo .rule {
  width: 33px;
}

.color-combo,
.ltype-combo,
.lweight-combo,
.plot-combo {
  letter-spacing: -0.55px;
}

/* main area */

.main {
  height: 547px;
  margin-top: 6px;
  flex: none;
  display: flex;
}

.side {
  width: 23px;
  margin-left: 1px;
  margin-right: 4px;
  flex: none;
}

.side.right {
  margin-left: 4px;
}

.side-grip {
  height: 8px;
  border: 1px solid #484848;
  background: repeating-linear-gradient(#777 0 1px, #4c4c4c 1px 3px);
}

.side-grip.order {
  margin-top: 0.5px;
}

.side-tools {
  display: flex;
  flex-direction: column;
  background-color: #eee;
  border-right: 1px solid #999;
}

.side-tools .icon {
  width: 22px;
  height: 20.600px;
  padding: 2.300px 0;
}

.abc {
  font-family: "Liberation Sans", Arial, sans-serif;
  font-size: 6.5px;
  font-weight: bold;
  fill: #222;
  stroke: none;
}

.hsep {
  height: 1px;
  margin: 2px;
  background-color: #999;
}

.document {
  width: 1222px;
  flex: none;
  border: 1px solid #bbb;
  background-color: #efefef;
}

.viewport-row {
  height: 527px;
  display: flex;
}

.viewport {
  width: 1203px;
  position: relative;
  overflow: hidden;
  background-color: #1f2831;
}

.drawing {
  display: block;
  width: 1203px;
  height: 527px;
  shape-rendering: crispEdges;
}

.smooth {
  shape-rendering: auto;
}

.view-label {
  position: absolute;
  left: 4px;
  top: 4px;
  color: #dfe2e5;
  font-size: 11px;
  letter-spacing: -0.18px;
}

.caption {
  position: absolute;
  left: 463px;
  top: 32px;
  color: #f4f4f4;
  font-family: "Liberation Sans", Arial, sans-serif;
  font-size: 29.500px;
  letter-spacing: 0.4px;
}

.dyn-input {
  position: absolute;
  left: 427px;
  top: 390px;
  width: 60px;
  height: 19px;
  border: 1px solid #111;
  background-color: white;
  line-height: 15px;
  padding: 1px 0;
}

.dyn-input span {
  display: inline-block;
  background-color: #0f74d1;
  color: #e4f1fc;
  font-size: 11.5px;
  letter-spacing: -0.85px;
}

.viewcube {
  position: absolute;
  left: 1097.5px;
  top: 15.500px;
  width: 89px;
  height: 89px;
  border: 9px solid #444b55;
  border-radius: 50%;
  display: flex;
  align-items: center;
  justify-content: center;
}

.viewcube span {
  position: absolute;
  width: 14px;
  line-height: 14px;
  text-align: center;
  color: #c2c6ca;
  font-size: 14px;
  font-weight: 700;
}

.viewcube .n {
  top: -13px;
}

.viewcube .s {
  bottom: -13px;
}

.viewcube .w {
  left: -13px;
}

.viewcube .e {
  right: -13px;
}

.face {
  width: 39px;
  height: 39px;
  display: flex;
  justify-content: center;
  align-items: center;
  background-color: #adb1b5;
  border: 1px solid #bbbfc3;
  color: #4a4f55;
  font-family: "Liberation Sans", Arial, sans-serif;
  font-size: 10px;
}

.face b {
  transform: scaleX(0.62);
}

.ucs-menu {
  position: absolute;
  left: 1120px;
  top: 124px;
  width: 43px;
  height: 16px;
  padding: 0 5px 0 4px;
  display: flex;
  align-items: center;
  justify-content: space-between;
  border: 1px solid #b3b6bb;
  border-radius: 3px;
  background-color: #8f9399;
  color: #50555c;
  font-size: 11px;
}

.ucs-menu svg {
  width: 8px;
  height: 5px;
  stroke: #b5b8bc;
}

.vscroll {
  flex: 1;
  display: flex;
  flex-direction: column;
  align-items: center;
  padding: 4px 1px 3px 0;
}

.vscroll svg {
  width: 10px;
  height: 8px;
  stroke: #444;
  stroke-width: 2;
}

.vscroll .thumb {
  width: 14px;
  height: 16px;
  margin-top: 432px;
  margin-bottom: auto;
  background-color: #cdcdcd;
}

.bottom-row {
  height: 18px;
  display: flex;
  background-color: #efefef;
  font-family: "Liberation Sans", Arial, sans-serif;
  font-size: 11.5px;
  letter-spacing: -0.75px;
}

.tab-nav {
  height: 15px;
  width: 57px;
  display: flex;
}

.tab-nav svg {
  width: 14.3px;
  height: 15px;
  padding: 2px;
  fill: #555;
  stroke: none;
  border-right: 1px solid #bbb;
}

.tab {
  height: 15px;
  line-height: 16px;
  padding: 0 5px 0 5px;
  color: #222;
}

.slash + .tab {
  padding-left: 3px;
}

.tab.active {
  width: 54px;
  padding: 0 0 0 10px;
  background-color: #1f2831;
  color: #e8e8e8;
  letter-spacing: -0.5px;
  clip-path: polygon(0 0, 100% 0, 88% 100%, 10% 100%);
}

.slash {
  width: 7px;
  height: 14px;
  stroke: #333;
}

.hscroll {
  width: 425px;
  margin-left: auto;
  display: flex;
  align-items: center;
  padding-bottom: 3px;
}

.hscroll svg {
  width: 8px;
  height: 10px;
  stroke: #444;
  stroke-width: 2;
}

.splitter {
  width: 5px;
  height: 14px;
  margin-right: 3px;
  background-color: #ccc;
}

.hscroll .thumb {
  width: 16px;
  height: 13px;
  margin-left: 167px;
  margin-right: 197px;
  background-color: #cdcdcd;
}

/* command line */

.command {
  height: 54px;
  margin-top: 2px;
  flex: none;
  display: flex;
  font-family: "DejaVu Sans Mono", monospace;
  font-size: 11px;
  letter-spacing: -0.07px;
  white-space: nowrap;
}

.command-side {
  width: 21px;
  display: flex;
  flex-direction: column;
  align-items: center;
  background: linear-gradient(90deg, #6e6e6e, #474747);
}

.command-side .dots {
  width: 17px;
  height: 6px;
  margin: 3px 0 7px;
  background: repeating-linear-gradient(90deg, #999 0 1px, #555 1px 2px);
}

.command-side svg {
  width: 10px;
  height: 10px;
  stroke: #eee;
}

.command-side .wrench {
  width: 14px;
  height: 14px;
  margin-top: 9px;
}

.command-lines {
  width: 1257px;
  border-right: 1px solid #888;
}

.history {
  height: 33px;
  padding: 1px 3px;
  background-color: #c8c8c8;
  border-top: 1px solid #ddd;
  border-bottom: 1px solid #aaa;
  line-height: 14px;
}

.prompt {
  height: 21px;
  position: relative;
  display: flex;
  align-items: center;
  padding-left: 1px;
  background-color: white;
}

.prompt p {
  color: #111;
}

.prompt b {
  letter-spacing: -0.1px;
}

.prompt .drop {
  width: 6px;
  margin-right: 5px;
}

.option {
  padding: 1px 0;
  border-radius: 3px;
  background-color: #d2d2d2;
  color: #333;
}

.option i {
  font-style: normal;
  color: #2a22c0;
}

.ibeam {
  position: absolute;
  left: 177px;
  top: -3px;
  width: 9px;
  height: 16px;
  stroke: #555;
}

/* status bar, only its upper half is visible */

.statusbar {
  height: 13px;
  overflow: hidden;
  flex: none;
  display: flex;
  border-top: 1px solid #1d1d1d;
  background: linear-gradient(#5d5d5d, #858585);
  font-family: "Liberation Sans", Arial, sans-serif;
  font-size: 12px;
  letter-spacing: -0.3px;
}

.coords {
  width: 185px;
  padding: 3px 0 0 12px;
  display: flex;
  gap: 11px;
  color: #111;
  border-right: 2px solid #333;
}

.status-tools {
  display: flex;
}

.status-tools svg,
.cell {
  width: 20.600px;
  height: 20px;
  flex: none;
  padding-bottom: 4px;
  background: linear-gradient(#c2c2c2, #999);
  border-right: 1px solid #666;
}

.status-tools .on {
  background: linear-gradient(#e4f4fa, #9fd0de);
}

.status-tools .strong {
  background: #78b4e4;
}

.status-right {
  margin-left: auto;
  margin-right: 3px;
  display: flex;
}

.status-right .model {
  width: 48px;
  padding: 3px 0 0 3px;
  font-size: 11.5px;
  letter-spacing: -1.1px;
}

.gap {
  width: 11px;
  background-color: #555;
}

.gap.narrow {
  width: 6px;
}

.ratio {
  width: 47px;
  display: flex;
  align-items: center;
  padding-left: 3px;
  gap: 2px;
}

.ratio svg {
  width: 14px;
  height: 14px;
  padding: 0;
  background: none;
  border: 0;
}

.lamp {
  width: 29px;
  background: #6d6a58;
  text-align: center;
}

.lamp svg {
  width: 16px;
  height: 14px;
}

.tray {
  width: 11px;
  padding-top: 8px;
}
```
